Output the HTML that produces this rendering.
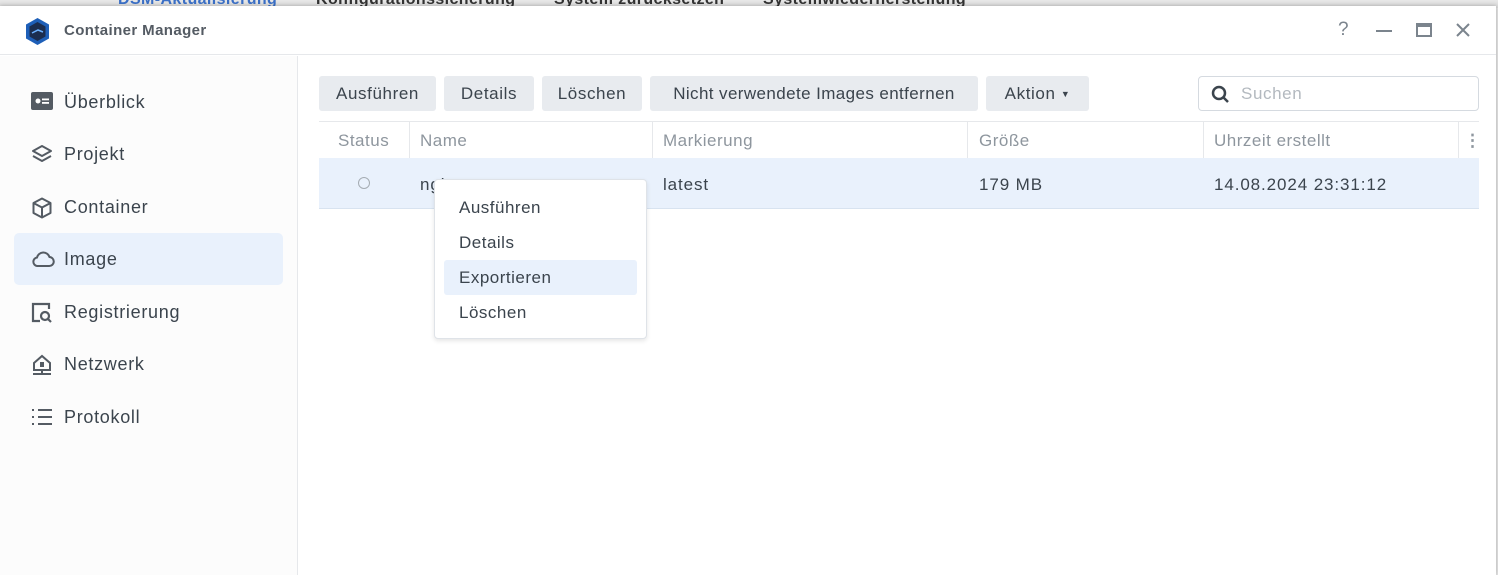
<!DOCTYPE html>
<html><head><meta charset="utf-8"><style>
*{box-sizing:border-box;margin:0;padding:0}
body{width:1498px;height:575px;overflow:hidden;background:#e4e4e4;font-family:"Liberation Sans",sans-serif;color:#414b55;position:relative;letter-spacing:.4px}
.top{position:absolute;left:0;top:0;width:1498px;height:8px;background:linear-gradient(#e8e8e8,#d8d8d8);overflow:hidden}
.top span{position:absolute;top:-9px;font-size:16px;font-weight:bold;color:#333}
.win{position:absolute;left:0;top:6px;width:1496px;height:569px;background:#fff;box-shadow:0 0 4px rgba(0,0,0,.25)}
.hdr{height:49px;border-bottom:1px solid #e6e8eb;position:relative}
.hdr .t{position:absolute;left:64px;top:16px;font-size:15px;font-weight:bold;color:#545b63}
.side{position:absolute;left:0;top:50px;width:298px;bottom:0;background:#fcfcfc;border-right:1px solid #e6e8eb}
.it{position:absolute;left:14px;width:269px;height:52px;border-radius:5px;font-size:18px;color:#3b444d;padding:16px 0 0 50px;letter-spacing:.7px}
.it.sel{background:#e9f1fc}
.it svg{position:absolute;left:17px;top:16px}
.btn{position:absolute;top:70px;height:35px;background:#e8ebef;border-radius:3px;font-size:17px;color:#3b444d;text-align:center;line-height:35px;letter-spacing:.6px}
.th{position:absolute;top:115px;height:37px;border-top:1px solid #e6e8eb;font-size:17px;color:#8e969e;line-height:37px;letter-spacing:.5px}
.th span{position:absolute}
.vl{position:absolute;top:0;width:1px;height:36px;background:#e6e8eb}
.row{position:absolute;left:319px;top:152px;width:1160px;height:51px;background:#e9f1fc;border-bottom:1px solid #d8e3f0;font-size:17px;color:#3b444d;letter-spacing:.9px}
.row span{position:absolute;top:17px}
.menu{position:absolute;left:434px;top:173px;width:213px;height:160px;background:#fff;border:1px solid #dfe3e8;border-radius:4px;box-shadow:0 2px 5px rgba(0,0,0,.1);font-size:17px;color:#3b444d;letter-spacing:.5px}
.menu div{position:absolute;left:9px;width:193px;height:35px;padding-left:15px;line-height:35px;border-radius:3px}
</style></head><body>
<div class="top"><span style="left:118px;color:#3a6fc6">DSM-Aktualisierung</span><span style="left:316px">Konfigurationssicherung</span><span style="left:554px">System zurücksetzen</span><span style="left:763px">Systemwiederherstellung</span></div>
<div class="win">
<div class="hdr">
<svg style="position:absolute;left:24px;top:11px" width="27" height="29" viewBox="0 0 27 29"><polygon points="13.5,1 25,7.5 25,21.5 13.5,28 2,21.5 2,7.5" fill="#1e5fb8"/><polygon points="13.5,5 21.5,9.5 21.5,19.5 13.5,24 5.5,19.5 5.5,9.5" fill="#1b2d4f"/><path d="M8 16 L14 13 L19 15" stroke="#6ab0ff" stroke-width="1.5" fill="none"/></svg>
<div class="t">Container Manager</div>
<div style="position:absolute;left:1338px;top:13px;font-size:19px;color:#7b848d">?</div>
<div style="position:absolute;left:1376px;top:24px;width:16px;height:2px;background:#7b848d"></div>
<div style="position:absolute;left:1416px;top:17px;width:16px;height:14px;border:2px solid #7b848d;border-top-width:4px"></div>
<svg style="position:absolute;left:1456px;top:17px" width="14" height="14"><path d="M1 1L13 13M13 1L1 13" stroke="#7b848d" stroke-width="2"/></svg>
</div>
<div class="side">
<div class="it" style="top:20px"><svg width="22" height="18" viewBox="0 0 22 18"><rect x="0" y="0" width="22" height="18" rx="2" fill="#545b63"/><circle cx="7" cy="9" r="2.5" fill="#fff"/><rect x="11" y="6.5" width="7" height="1.8" fill="#fff"/><rect x="11" y="10" width="7" height="1.8" fill="#fff"/></svg>Überblick</div>
<div class="it" style="top:72px"><svg width="22" height="22" viewBox="0 0 22 22"><path d="M11 2L20 7L11 12L2 7Z M2 12L11 17L20 12" stroke="#545b63" stroke-width="2" fill="none" stroke-linejoin="round"/></svg>Projekt</div>
<div class="it" style="top:125px"><svg width="22" height="22" viewBox="0 0 22 22"><path d="M11 1.5L19.5 6V16L11 20.5L2.5 16V6Z M2.5 6L11 10.5L19.5 6 M11 10.5V20.5" stroke="#545b63" stroke-width="2" fill="none" stroke-linejoin="round"/></svg>Container</div>
<div class="it sel" style="top:177px"><svg width="24" height="20" viewBox="0 0 24 20"><path d="M6 17H18A4.5 4.5 0 0 0 18.5 8A6.5 6.5 0 0 0 6 8.5A4.3 4.3 0 0 0 6 17Z" stroke="#545b63" stroke-width="2" fill="none"/></svg>Image</div>
<div class="it" style="top:230px"><svg width="22" height="22" viewBox="0 0 22 22"><path d="M9 19H2V2H18V7" stroke="#545b63" stroke-width="2.2" fill="none"/><circle cx="14" cy="14" r="4" stroke="#545b63" stroke-width="2.2" fill="none"/><path d="M17 17L20 20" stroke="#545b63" stroke-width="2.2"/></svg>Registrierung</div>
<div class="it" style="top:282px"><svg width="22" height="22" viewBox="0 0 22 22"><path d="M3 9L11 2L19 9V16H3Z" stroke="#545b63" stroke-width="2" fill="none"/><rect x="9" y="8" width="4" height="5" fill="#545b63"/><path d="M11 16V19M2 20H20" stroke="#545b63" stroke-width="2"/></svg>Netzwerk</div>
<div class="it" style="top:335px"><svg width="22" height="20" viewBox="0 0 22 20"><path d="M1 3H3M1 10H3M1 17H3M7 3H21M7 10H21M7 17H21" stroke="#545b63" stroke-width="2"/></svg>Protokoll</div>
</div>
<div class="btn" style="left:319px;width:117px">Ausführen</div>
<div class="btn" style="left:444px;width:90px">Details</div>
<div class="btn" style="left:542px;width:100px">Löschen</div>
<div class="btn" style="left:650px;width:328px;letter-spacing:.4px">Nicht verwendete Images entfernen</div>
<div class="btn" style="left:986px;width:103px">Aktion <span style="font-size:9px;vertical-align:2px">▼</span></div>
<div style="position:absolute;left:1198px;top:70px;width:281px;height:35px;border:1px solid #d5dae0;border-radius:4px;font-size:17px;color:#b3b9bf;padding:7px 0 0 42px;letter-spacing:.6px">Suchen
<svg style="position:absolute;left:12px;top:8px" width="20" height="20"><circle cx="8" cy="8" r="6" stroke="#3b444d" stroke-width="2.5" fill="none"/><path d="M12.5 12.5L17 17" stroke="#3b444d" stroke-width="2.5"/></svg></div>
<div class="th" style="left:319px;width:1160px">
<span style="left:19px">Status</span><span style="left:101px">Name</span><span style="left:344px">Markierung</span><span style="left:660px">Größe</span><span style="left:895px">Uhrzeit erstellt</span><span style="left:1145px;color:#8e969e;font-weight:bold">⋮</span>
<div class="vl" style="left:90px"></div><div class="vl" style="left:333px"></div><div class="vl" style="left:648px"></div><div class="vl" style="left:884px"></div><div class="vl" style="left:1139px"></div>
</div>
<div class="row"><span style="left:39px;top:19px;width:12px;height:12px;border:1.5px solid #a5acb3;border-radius:50%"></span><span style="left:101px">ngi</span><span style="left:344px">latest</span><span style="left:660px">179 MB</span><span style="left:895px">14.08.2024 23:31:12</span></div>
<div class="menu"><div style="top:10px">Ausführen</div><div style="top:45px">Details</div><div style="top:80px;background:#e9f1fc">Exportieren</div><div style="top:115px">Löschen</div></div>
</div>
</body></html>
